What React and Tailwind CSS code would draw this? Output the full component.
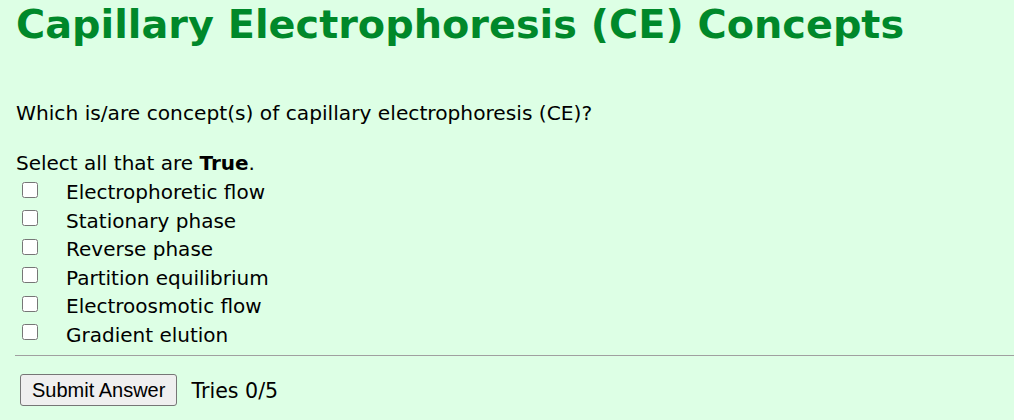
const options = [
  'Electrophoretic flow',
  'Stationary phase',
  'Reverse phase',
  'Partition equilibrium',
  'Electroosmotic flow',
  'Gradient elution',
];

export default function App() {
  return (
    <div className="min-h-[420px] bg-[#ddffe5] pl-[16px] text-[20px] text-black font-['DejaVu_Sans',Verdana,sans-serif]">
      <h1 className="text-[39.8px] leading-[48px] font-bold text-[#00882a]">Capillary Electrophoresis (CE) Concepts</h1>

      <p className="mt-[53px] leading-[24px] text-[20.2px]">Which is/are concept(s) of capillary electrophoresis (CE)?</p>

      <p className="mt-[26px] leading-[24px]">Select all that are <b>True</b>.</p>
      <div>
        {options.map(o => (
          <label key={o} className="flex items-start h-[28.5px]">
            <input type="checkbox" className="w-[16px] h-[16px] mt-[6.5px] ml-[6px] mr-[28px]" />
            <span className="leading-[24px] mt-[5px]">{o}</span>
          </label>
        ))}
      </div>

      <hr className="mt-[9px] -ml-[1px] border-0 border-t border-[#a0a0a0]" />

      <div className="flex items-center mt-[18px] gap-[14px]">
        <button className="ml-[4px] h-[32px] px-[11px] bg-[#efefef] border border-[#767676] rounded-[3px] text-[20px] font-['Liberation_Sans',Arial,sans-serif] leading-none">Submit Answer</button>
        <span className="text-[20.6px] leading-[24px] mt-[1px]">Tries 0/5</span>
      </div>
    </div>
  );
}
